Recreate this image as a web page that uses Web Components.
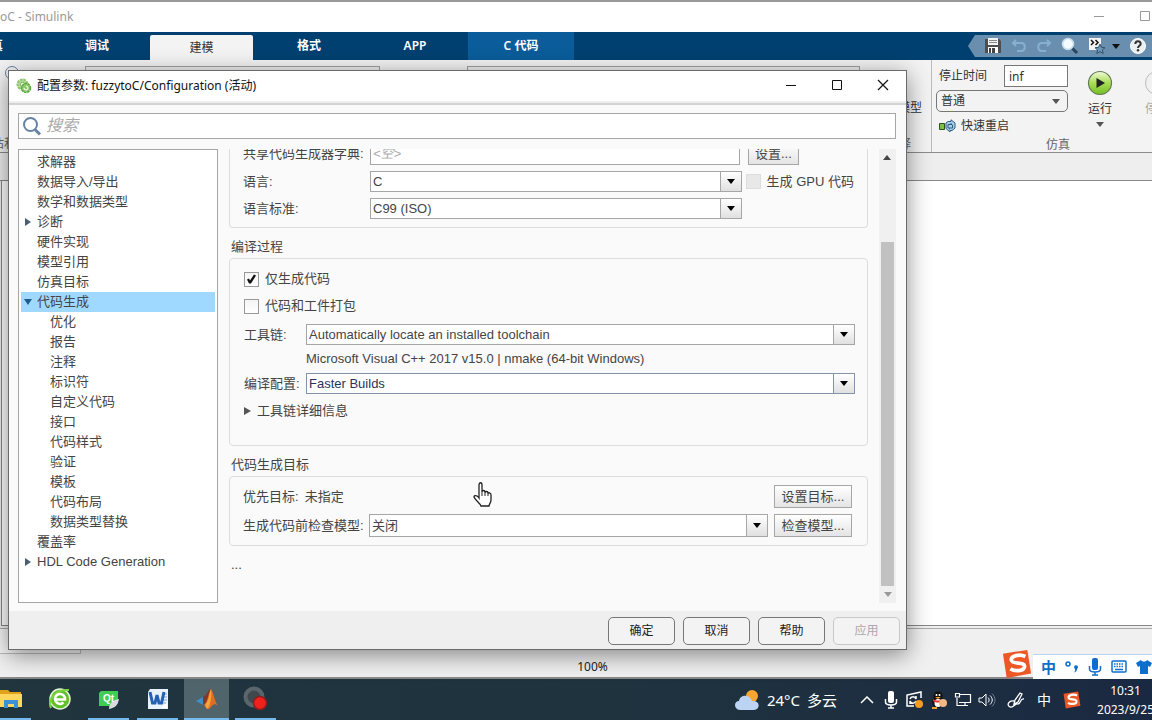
<!DOCTYPE html>
<html lang="zh-CN">
<head>
<meta charset="utf-8">
<meta name="viewport" content="width=device-width, initial-scale=1">
<title>Simulink</title>
<style>
  :root {
    --ui-font: "Noto Sans", "Noto Sans CJK SC", sans-serif;
    --form-font: "Liberation Sans", "Noto Sans CJK SC", sans-serif;
    --text: #444;
    --line: #a6a6a6;
    --navy: #004070;
  }

  body {
    margin: 0;
    height: 100vh;
    overflow: hidden;
    font: 12px/16px var(--ui-font);
    color: #333;
  }
</style>
</head>
<body>
<desktop-shell></desktop-shell>

<script>
const ICONS = {
  gear: `<svg width="16" height="16" viewBox="0 0 16 16"><circle cx="6.500" cy="6.500" r="5" fill="#b9dc9d" stroke="#8cc46e" stroke-width="2" stroke-dasharray="2.600 .8"/><circle cx="6.500" cy="6.500" r="2.200" fill="#fff" stroke="#6fae4c"/><circle cx="10" cy="10" r="4.500" fill="#8fcb6c" stroke="#5aa63f" stroke-width="1.500" stroke-dasharray="2.400 .8"/><path d="M8 10a2 2 0 1 0 2-2" fill="none" stroke="#fff"/></svg>`,
  search: `<svg width="20" height="20" viewBox="0 0 20 20" fill="none" stroke="#6683a3"><circle cx="8.500" cy="8.500" r="6.500" stroke-width="2"/><path d="M13 13.500l5 5" stroke-width="3"/></svg>`,
  minimize: `<svg width="12" height="12" viewBox="0 0 12 12"><path d="M1 6.500h10" stroke="currentColor"/></svg>`,
  maximize: `<svg width="12" height="12" viewBox="0 0 12 12"><path d="M1.500 1.500h9v9h-9z" fill="none" stroke="currentColor"/></svg>`,
  close: `<svg width="12" height="12" viewBox="0 0 12 12"><path d="M1 1l10 10M11 1L1 11" stroke="currentColor" stroke-width="1.200"/></svg>`,
  save: `<svg width="18" height="18" viewBox="0 0 18 18"><path d="M1 2h14l2 2v12H1z" fill="#4e4e50"/><path d="M4 1h10v7H4z" fill="#f3f3f3"/><path d="M5 3.500h8M5 5.500h8" stroke="#888"/><path d="M4 10h10v6H4z" fill="#fff"/><path d="M5 11h2v5H5zM8 11h3v5H8z" fill="#444"/></svg>`,
  undo: `<svg width="16" height="14" viewBox="0 0 16 14" fill="none" stroke="#86b0d2" stroke-width="2"><path d="M5 1L2 4l3 3M2 4h8c5 0 5 8 0 8H6"/></svg>`,
  redo: `<svg width="16" height="14" viewBox="0 0 16 14" fill="none" stroke="#86b0d2" stroke-width="2"><path d="M11 1l3 3-3 3M14 4H6c-5 0-5 8 0 8h4"/></svg>`,
  lens: `<svg width="18" height="18" viewBox="0 0 18 18"><path d="M10 10l6 6" stroke="#29445c" stroke-width="3"/><circle cx="7" cy="7" r="5.500" fill="#f3fbff" stroke="#c8dbe8" stroke-width="1.500"/></svg>`,
  favorite: `<svg width="18" height="18" viewBox="0 0 18 18"><path d="M1 1h12v12H1z" fill="#f4f4f4"/><path d="M3 3l2.500 2.500L3 8M7.500 3L10 5.500 7.500 8" fill="none" stroke="#111" stroke-width="1.500"/><path d="M12 7l1.500 3.300 3.500.4-2.600 2.300.8 3.500-3.200-1.800L8.800 16.500l.8-3.500L7 10.700l3.500-.4z" fill="#6e93b3" stroke="#33536f"/></svg>`,
  help: `<svg width="18" height="18" viewBox="0 0 18 18"><circle cx="9" cy="9" r="7.500" fill="#e9eff3" stroke="#fff"/><path d="M6.300 7c0-3.600 5.400-3.600 5.400-.3C11.700 8.800 9 8.700 9 11" fill="none" stroke="#333" stroke-width="2"/><circle cx="9" cy="13.200" r="1.200" fill="#333"/></svg>`,
  caret: `<svg width="8" height="5" viewBox="0 0 8 5"><path d="M0 0h8L4 5z" fill="currentColor"/></svg>`,
  restart: `<svg width="17" height="14" viewBox="0 0 17 14"><path d="M.5 4.500h5v6h-5z" fill="#7cc142" stroke="#2c4f20"/><path d="M9 2.500h3V.8L16 4v5l-3 2.500h-2V13l-4-3.500V4z" fill="#a8d0ea" stroke="#2d5f83"/><path d="M9 9V5.500h4L11.500 4M13.500 6v3H9.500l1.500 1.300" fill="none" stroke="#2d5f83"/></svg>`,
  run: `<svg width="26" height="26" viewBox="0 0 26 26"><defs><linearGradient id="g" x2="0" y2="1"><stop stop-color="#f1fbd9"/><stop offset=".5" stop-color="#a7dd55"/><stop offset="1" stop-color="#74bd24"/></linearGradient></defs><circle cx="13" cy="13" r="11.500" fill="url(#g)" stroke="#667a55" stroke-width="1.200"/><path d="M9.500 8v10l8.500-5z" fill="#222"/></svg>`,
  stop: `<svg width="26" height="26" viewBox="0 0 26 26"><circle cx="13" cy="13" r="11.500" fill="#f1f1f1" stroke="#bbb"/><path d="M9 9h8v8H9z" fill="#ccc"/></svg>`,
  explorer: `<svg width="24" height="22" viewBox="0 0 24 22"><path d="M1 2h8l2 2h11v15H1z" fill="#e0a21b"/><path d="M1 6h22v13H1z" fill="#ffd75e"/><path d="M5 12h14v8h-4v-4H9v4H5z" fill="#3d91d9"/></svg>`,
  browser: `<svg width="24" height="24" viewBox="0 0 24 24"><circle cx="12" cy="12" r="10" fill="#62bf2c" stroke="#e4f5d8" stroke-width="1.500"/><path d="M3 21C-1 12 8 2 21 3" fill="none" stroke="#7dd441" stroke-width="2"/><path d="M7 12.500h10a5 5 0 1 0-1.500 3" fill="none" stroke="#fff" stroke-width="2.500"/></svg>`,
  word: `<svg width="24" height="24" viewBox="0 0 24 24"><path d="M4 2h18v20H2V5z" fill="#e9f1fb"/><path d="M16 7h5M16 10h5M16 13h5M16 16h4" stroke="#7ba5d8"/><path d="M4 5l2.500 11h2.500l2-8 2 8h2.500L18 5" fill="none" stroke="#2460b4" stroke-width="3"/><path d="M15 21l6-5v5z" fill="#fff"/></svg>`,
  matlab: `<svg width="24" height="24" viewBox="0 0 24 24"><path d="M1 14l7-4 4 3-4 5z" fill="#3f8fc6"/><path d="M8 10c4-1 5-8 8-8l-4 14-4 2z" fill="#85362b"/><path d="M16 2c2 2 4 13 7 17-3-3-5-2-7 1-2 3-3 2-4 2l-3-4c4-3 4-12 7-16z" fill="#df6d22"/><path d="M16 2c1 4 0 12-2 18l-2 2-2-4c4-4 4-11 6-16z" fill="#f4a43a"/></svg>`,
  recorder: `<svg width="26" height="26" viewBox="0 0 26 26"><circle cx="11" cy="11" r="8.500" fill="#3e484e" stroke="#5b666c" stroke-width="4"/><circle cx="17" cy="17" r="6.500" fill="#f0201a" stroke="#8b1e20" stroke-width="1.500"/></svg>`,
  weather: `<svg width="26" height="22" viewBox="0 0 26 22"><circle cx="18" cy="7" r="6" fill="#f6a531"/><path d="M6 21C-1 20 0 12 5 12c1-7 11-7 13 0 8-1 9 8 2 9z" fill="#bcd3f4"/></svg>`,
  chevron: `<svg width="14" height="8" viewBox="0 0 14 8"><path d="M1 7l6-6 6 6" fill="none" stroke="#fff" stroke-width="1.500"/></svg>`,
  mic: `<svg width="14" height="18" viewBox="0 0 14 18"><rect x="4" width="6" height="12" rx="2" fill="currentColor"/><path d="M1.500 8v3c0 4 11 4 11 0V8M7 14v3M4 17h6" fill="none" stroke="currentColor" stroke-width="1.500"/></svg>`,
  sync: `<svg width="20" height="18" viewBox="0 0 20 18" fill="none" stroke="#fff" stroke-width="1.500"><path d="M9 15H2V4l14-3v6M5 8c1-3 5-3 6 0V5M11 10c-1 3-5 3-6 0v3"/><circle cx="14" cy="13" r="4" fill="#f49b20" stroke="none"/></svg>`,
  penguin: `<svg width="18" height="18" viewBox="0 0 18 18"><ellipse cx="8" cy="11" rx="6" ry="6" fill="#151515"/><circle cx="8" cy="5" r="4.500" fill="#111"/><ellipse cx="8" cy="12" rx="3.500" ry="4" fill="#fff"/><path d="M3 8c3 2 7 2 10 0v2c-3 2-7 2-10 0z" fill="#e8342a"/><circle cx="6.500" cy="4" r="1" fill="#fff"/><circle cx="9.500" cy="4" r="1" fill="#fff"/><path d="M5 6h6l-3 2z" fill="#f2a128"/><path d="M2 16h5v2H2z" fill="#f2a128"/><circle cx="13" cy="12" r="4" fill="#f3b785"/></svg>`,
  network: `<svg width="18" height="16" viewBox="0 0 18 16" fill="none" stroke="#fff" stroke-width="1.200"><path d="M5 2.500h11.500v8H5M3 6v7.500h11M11 10.500v3M1.500 1.500h4V5h-4z"/></svg>`,
  volume: `<svg width="18" height="16" viewBox="0 0 18 16" fill="none" stroke="#fff"><path d="M1 6h3l4-4v12l-4-4H1z"/><path d="M10 5.500c1.500 1.500 1.500 3.500 0 5M12 3.500c3 3 3 6 0 9"/><path d="M14 1.500c4 4 4 9 0 13" stroke="#6d7c8b"/></svg>`,
  pen: `<svg width="18" height="18" viewBox="0 0 18 18" fill="none" stroke="#fff" stroke-width="1.300"><path d="M7 13l1-4 5-7 2 1-4 8zM7 10c-5-1-8 4-4 6 4 1 5-4 8-3 3 0 2-6 6-5"/></svg>`,
  sogou: `<svg width="100%" height="100%" viewBox="0 0 32 32"><path d="M1 5l26-4 4 25-26 5z" fill="#eb5725"/><path d="M25 8C19 5 9 7 10 12c1 5 15 1 14 7-1 5-11 5-15 2" fill="none" stroke="#fff" stroke-width="4"/></svg>`,
  punct: `<svg width="14" height="12" viewBox="0 0 14 12"><circle cx="3" cy="3" r="2" fill="none" stroke="currentColor" stroke-width="1.500"/><path d="M9 6a2 2 0 1 1 3 2c0 2-1 3-3 3.500 1-1 1.500-2 1-3z" fill="currentColor"/></svg>`,
  keyboard: `<svg width="16" height="14" viewBox="0 0 16 14"><rect x="1" y="1" width="14" height="11" rx="1" fill="none" stroke="currentColor" stroke-width="1.500"/><path d="M3 4h10M3 6.500h10" stroke="currentColor" stroke-width="1.500" stroke-dasharray="1.500 1"/><path d="M4 9.500h8" stroke="currentColor" stroke-width="1.500"/></svg>`,
  shirt: `<svg width="16" height="16" viewBox="0 0 16 16"><path d="M5 1c1 2 5 2 6 0l5 3-2 4-2-1v8H4V7L2 8 0 4z" fill="currentColor"/></svg>`,
  qt: `<svg width="22" height="22" viewBox="0 0 22 22"><path d="M3 3h17v12l-3 3H1V5z" fill="#41cd52"/><path d="M11 21c0-5 3-9 10-10-1 6-4 9-10 10z" fill="#d9dcdd"/></svg>`,
  hand: `<svg width="20" height="26" viewBox="0 0 20 26"><path d="M6 16V3c0-3 3-3 3 0v7c0-2 3-2 3 0v1c0-2 3-2 3 0v1c0-2 3-1.500 3 1v5c0 3-2 4-2 6H8c-1-3-6-6-7-9 0-2 3-2 5 1z" fill="#fff" stroke="#222" stroke-width="1.300"/><path d="M9 10v4M12 11v3M15 12v2" stroke="#222"/></svg>`,
};

class AppIcon extends HTMLElement {
  constructor() {
    super();
    this.attachShadow({ mode: "open" });
  }

  connectedCallback() {
    this.shadowRoot.innerHTML = `
      <style>
        :host { display: inline-flex; align-items: center; justify-content: center; flex: none; }
        svg { display: block; }
      </style>
      ${ICONS[this.getAttribute("name")] || ""}
    `;
  }
}

class WindowTitle extends HTMLElement {
  constructor() {
    super();
    this.attachShadow({ mode: "open" });
    this.shadowRoot.innerHTML = `
      <style>
        :host { display: flex; align-items: center; background: #fff; flex: none; }
        .caption { flex: 1; display: flex; align-items: center; gap: 5px; white-space: nowrap; }
        button {
          width: 46px;
          height: 28px;
          border: 0;
          padding: 0;
          background: none;
          color: inherit;
        }
      </style>
      <div class="caption"><slot></slot></div>
      <button aria-label="最小化"><app-icon name="minimize"></app-icon></button>
      <button aria-label="最大化"><app-icon name="maximize"></app-icon></button>
      <button aria-label="关闭"><app-icon name="close"></app-icon></button>
    `;
  }
}

class TabStrip extends HTMLElement {
  constructor() {
    super();
    this.attachShadow({ mode: "open" });
    this.shadowRoot.innerHTML = `
      <style>
        :host {
          display: flex;
          justify-content: space-between;
          height: 28px;
          background: var(--navy);
        }
        nav { display: flex; margin-left: -62px; }
        nav button {
          width: 106px;
          border: 0;
          padding: 0;
          background: none;
          color: #fff;
          font: 600 12px/16px var(--ui-font);
        }
        nav button.active {
          margin: 3px 3px 0 0;
          width: 103px;
          background: #f3f3f3;
          color: #333;
          font-weight: 400;
          border-radius: 2px 2px 0 0;
        }
        nav button.context { background: #0a5c9a; }
        .quick {
          display: flex;
          align-items: center;
          gap: 9px;
          margin: 3px 0;
          padding: 0 5px 0 16px;
          background: #6a8fae;
          clip-path: polygon(7px 0, 100% 0, 100% 100%, 7px 100%, 0 50%);
        }
        .quick button { display: flex; border: 0; padding: 0; background: none; color: #111; }
        .quick .more { margin-left: -3px; }
      </style>
      <nav>
        <button>仿真</button>
        <button>调试</button>
        <button class="active">建模</button>
        <button>格式</button>
        <button>APP</button>
        <button class="context">C 代码</button>
      </nav>
      <div class="quick">
        <button aria-label="保存"><app-icon name="save"></app-icon></button>
        <button aria-label="撤销"><app-icon name="undo"></app-icon></button>
        <button aria-label="重做"><app-icon name="redo"></app-icon></button>
        <button aria-label="查找"><app-icon name="lens"></app-icon></button>
        <button aria-label="收藏"><app-icon name="favorite"></app-icon></button>
        <button class="more" aria-label="更多"><app-icon name="caret"></app-icon></button>
        <button aria-label="帮助"><app-icon name="help"></app-icon></button>
      </div>
    `;
  }
}

class ToolStrip extends HTMLElement {
  constructor() {
    super();
    this.attachShadow({ mode: "open" });
    this.shadowRoot.innerHTML = `
      <style>
        :host {
          display: flex;
          height: 92px;
          background: #f3f3f3;
          border-bottom: 1px solid #8c8c8c;
          overflow: hidden;
        }
        .tools { flex: 1; display: flex; justify-content: space-between; gap: 18px; padding: 6px 9px 0 5px; }
        .first { width: 62px; display: flex; flex-direction: column; justify-content: space-between; white-space: nowrap; color: #666; }
        .first span { margin-left: -25px; }
        .ring { width: 12px; height: 12px; border: 1px solid #6683a3; border-radius: 50%; }
        .gallery { flex: 3; height: 60px; border: 1px solid #a0a0a0; background: #eee; }
        .gallery.wide { flex: 4; margin-left: 69px; }
        .select-model {
          width: 44px;
          display: flex;
          flex-direction: column;
          align-items: flex-end;
          justify-content: flex-end;
        }
        .select-model span { height: 36px; white-space: nowrap; }
        .select-model small { font-size: 12px; height: 16px; padding-right: 11px; white-space: nowrap; color: #666; }
        .simulate {
          display: grid;
          grid-template-columns: 132px 44px 20px;
          grid-template-rows: 78px 14px;
          column-gap: 10px;
          padding-left: 4px;
          border-left: 1px solid #bbb;
        }
        .controls { display: grid; gap: 3px; align-content: start; padding-top: 5px; }
        .stop { display: flex; align-items: center; justify-content: space-between; padding-left: 3px; }
        input, select {
          box-sizing: border-box;
          height: 22px;
          margin: 0;
          background: #fff;
          color: #333;
          border: 1px solid #777;
          font: 12px/16px var(--ui-font);
        }
        input { width: 64px; padding: 0 4px; }
        .pick { display: grid; align-items: center; }
        .pick > * { grid-area: 1 / 1; }
        .pick app-icon { justify-self: end; margin-right: 8px; color: #555; pointer-events: none; }
        select { appearance: none; width: 100%; border-radius: 5px; padding: 0 4px; background: #f3f3f3; }
        button { border: 0; padding: 0; background: none; color: #333; font: 12px/16px var(--ui-font); }
        .fast { display: flex; align-items: center; gap: 5px; padding-left: 3px; height: 22px; }
        .big { display: flex; flex-direction: column; align-items: center; gap: 5px; padding-top: 10px; color: #333; }
        .big app-icon[name="caret"] { color: #555; }
        .big:disabled { width: 50px; color: #aaa; }
        .title { grid-column: 1 / 3; padding-left: 110px; line-height: 14px; color: #666; white-space: nowrap; }
      </style>
      <div class="tools">
        <div class="first"><div class="ring"></div><span>评估和管理</span></div>
        <div class="gallery"></div>
        <div class="gallery wide"></div>
        <div class="select-model"><span>选择模型</span><small>选择</small></div>
      </div>
      <div class="simulate">
        <div class="controls">
          <div class="stop"><label for="stop-time">停止时间</label><input id="stop-time" value="inf"></div>
          <div class="pick">
            <select aria-label="仿真模式"><option>普通</option></select>
            <app-icon name="caret"></app-icon>
          </div>
          <button class="fast"><app-icon name="restart"></app-icon>快速重启</button>
        </div>
        <button class="big"><app-icon name="run"></app-icon>运行<app-icon name="caret"></app-icon></button>
        <button class="big" disabled><app-icon name="stop"></app-icon>停止</button>
        <div class="title">仿真</div>
      </div>
    `;
  }
}

class NavTree extends HTMLElement {
  constructor() {
    super();
    this.attachShadow({ mode: "open" });
    this.shadowRoot.innerHTML = `
      <style>
        :host { display: block; background: #fff; border: 1px solid var(--line); padding: 2px; box-sizing: border-box; overflow: hidden; }
        ul { list-style: none; margin: 0; padding: 0; }
        li {
          display: flex;
          align-items: center;
          height: 20px;
          line-height: 18px;
          white-space: nowrap;
        }
        li::before { content: ""; width: 16px; flex: none; }
        li.child::before { width: 29px; }
        li.closed::before, li.open::before { width: 8px; height: 8px; margin: 0 5px 0 3px; background: #4b5d70; }
        li.closed::before { clip-path: polygon(1px 0, 7px 50%, 1px 100%); }
        li.open::before { background: #1d5c93; clip-path: polygon(0 1px, 100% 1px, 50% 7px); }
        li.selected { background: #a0d9ff; }
      </style>
      <ul role="tree" aria-label="配置类别"></ul>
    `;
  }

  connectedCallback() {
    const items = [
      ["求解器"], ["数据导入/导出"], ["数学和数据类型"], ["诊断", "closed"],
      ["硬件实现"], ["模型引用"], ["仿真目标"], ["代码生成", "open selected"],
      ["优化", "child"], ["报告", "child"], ["注释", "child"], ["标识符", "child"],
      ["自定义代码", "child"], ["接口", "child"], ["代码样式", "child"],
      ["验证", "child"], ["模板", "child"], ["代码布局", "child"],
      ["数据类型替换", "child"], ["覆盖率"], ["HDL Code Generation", "closed"],
    ];
    this.shadowRoot.querySelector("ul").innerHTML = items
      .map(([text, state = ""]) => `<li role="treeitem" class="${state}">${text}</li>`)
      .join("");
  }
}

class ComboField extends HTMLElement {
  constructor() {
    super();
    this.attachShadow({ mode: "open" });
  }

  connectedCallback() {
    this.shadowRoot.innerHTML = `
      <style>
        :host { display: flex; align-items: center; }
        label { width: var(--label-width); flex: none; white-space: nowrap; }
        .box { flex: 1; display: grid; height: var(--box-height, 21px); }
        select, .arrow { grid-area: 1 / 1; box-sizing: border-box; }
        select {
          appearance: none;
          width: 100%;
          margin: 0;
          padding: 0 24px 0 2px;
          border: 1px solid var(--line);
          border-radius: 0;
          background: #fff;
          color: var(--text);
          font: 13px/18px var(--form-font);
        }
        .arrow {
          justify-self: end;
          width: 22px;
          display: grid;
          place-items: center;
          border: 1px solid var(--line);
          background: linear-gradient(#fff, #e0e0e0);
          color: #000;
          pointer-events: none;
        }
        :host([focused]) select, :host([focused]) .arrow { border-color: #8494a8; }
        :host([focused]) select { color: #26345c; }
      </style>
      <label for="field">${this.getAttribute("label")}</label>
      <div class="box">
        <select id="field"><option>${this.getAttribute("value")}</option></select>
        <span class="arrow"><app-icon name="caret"></app-icon></span>
      </div>
      <slot></slot>
    `;
  }
}

class CheckField extends HTMLElement {
  constructor() {
    super();
    this.attachShadow({ mode: "open" });
  }

  connectedCallback() {
    this.shadowRoot.innerHTML = `
      <style>
        :host { display: block; white-space: nowrap; }
        label { display: flex; align-items: center; gap: 6px; line-height: 18px; }
        input {
          appearance: none;
          box-sizing: border-box;
          width: 15px;
          height: 15px;
          margin: 0;
          border: 1px solid #999;
          background: linear-gradient(#f4f4f4, #fff);
        }
        input:checked::before {
          content: "";
          display: block;
          width: 13px;
          height: 13px;
          background: #111;
          clip-path: polygon(2px 7px, 4px 6px, 5px 8px, 9px 2px, 11px 3px, 6px 11px, 4px 11px);
        }
        input:disabled { border-color: #ddd; background: #e8e8e8; }
      </style>
      <label>
        <input type="checkbox" ${this.hasAttribute("checked") ? "checked" : ""} ${this.hasAttribute("disabled") ? "disabled" : ""}>
        <slot></slot>
      </label>
    `;
  }
}

class PushButton extends HTMLElement {
  constructor() {
    super();
    this.attachShadow({ mode: "open" });
  }

  connectedCallback() {
    this.shadowRoot.innerHTML = `
      <style>
        :host { display: inline-flex; flex: none; }
        button {
          box-sizing: border-box;
          height: 23px;
          width: 100%;
          padding: 0 6px;
          border: 1px solid var(--line);
          background: linear-gradient(#fff, #e4e4e4);
          color: var(--text);
          font: 13px/18px var(--form-font);
          white-space: nowrap;
        }
        :host([round]) { width: 67px; }
        :host([round]) button {
          height: 28px;
          border: 1px solid #777;
          border-radius: 5px;
          background: #f3f3f3;
          color: #222;
          font: 12px/16px var(--ui-font);
        }
        :host([round][disabled]) button { border-color: #c8c8c8; color: #aaa; }
      </style>
      <button ${this.hasAttribute("disabled") ? "disabled" : ""}><slot></slot></button>
    `;
  }
}

class SettingGroup extends HTMLElement {
  constructor() {
    super();
    this.attachShadow({ mode: "open" });
  }

  connectedCallback() {
    const heading = this.getAttribute("heading");
    this.shadowRoot.innerHTML = `
      <style>
        :host { display: block; flex: none; }
        h3 { margin: 0; padding: 10px 2px 2px; font: 13px/18px var(--form-font); }
        .content { border: 1px solid #ddd; border-radius: 4px; padding: 8px 13px; }
        :host([cut]) .content { border-top: 0; border-radius: 0 0 4px 4px; padding-top: 0; }
      </style>
      ${heading ? `<h3>${heading}</h3>` : ""}
      <div class="content"><slot></slot></div>
    `;
  }
}

class ScrollRail extends HTMLElement {
  constructor() {
    super();
    this.attachShadow({ mode: "open" });
    this.shadowRoot.innerHTML = `
      <style>
        :host { display: flex; flex-direction: column; width: 17px; background: #f0f0f0; }
        button { height: 17px; border: 0; padding: 0; background: none; color: #999; display: grid; place-items: center; }
        .up { color: #444; transform: rotate(180deg); }
        .track { flex: 1; display: flex; flex-direction: column; justify-content: flex-end; padding: 0 2px; }
        .thumb { height: 82%; background: #c1c1c1; }
      </style>
      <button class="up" aria-label="向上滚动"><app-icon name="caret"></app-icon></button>
      <div class="track"><div class="thumb"></div></div>
      <button aria-label="向下滚动"><app-icon name="caret"></app-icon></button>
    `;
  }
}

class CodeGenPane extends HTMLElement {
  constructor() {
    super();
    this.attachShadow({ mode: "open" });
    this.shadowRoot.innerHTML = `
      <style>
        :host {
          display: flex;
          flex-direction: column;
          justify-content: flex-end;
          overflow: hidden;
          box-sizing: border-box;
          padding: 0 11px 29px;
          line-height: 18px;
        }
        .rows { display: grid; gap: 6px; }
        .language { --label-width: 127px; }
        .row { display: flex; align-items: center; }
        .side { width: 108px; margin-left: 4px; }
        .row label { width: var(--label-width); white-space: nowrap; }
        .row input {
          flex: 1;
          min-width: 0;
          box-sizing: border-box;
          height: 22px;
          margin: 0;
          padding: 0 2px;
          border: 1px solid var(--line);
          background: #fff;
          font: italic 13px/18px var(--form-font);
        }
        input::placeholder { color: #aaa; opacity: 1; }
        .row .side { width: 106px; margin-left: 8px; }
        .build { --label-width: 62px; display: grid; padding: 3px 0 17px 1px; }
        .build check-field { height: 27px; }
        .note { padding: 5px 0 5px 62px; white-space: nowrap; }
        .build combo-field { margin-right: -1px; }
        .details {
          display: flex;
          align-items: center;
          gap: 6px;
          margin-top: 8px;
          padding: 0;
          border: 0;
          background: none;
          color: var(--text);
          font: 13px/18px var(--form-font);
        }
        .details::before { content: ""; width: 7px; height: 8px; background: #555; clip-path: polygon(0 0, 100% 50%, 0 100%); }
        .target { --label-width: 126px; --box-height: 23px; padding-right: 2px; }
        .target .row { gap: 6px; }
        .target .row span:last-of-type { flex: 1; }
        .target push-button, .target .check { width: 78px; }
        .target .check { margin-left: 6px; }
        .more { padding: 10px 2px 0; }
      </style>
      <setting-group cut>
        <div class="rows language">
          <div class="row">
            <label for="dictionary">共享代码生成器字典:</label>
            <input id="dictionary" placeholder="&lt;空&gt;">
            <div class="side"><push-button>设置...</push-button></div>
          </div>
          <combo-field label="语言:" value="C"><check-field class="side" disabled>生成 GPU 代码</check-field></combo-field>
          <combo-field label="语言标准:" value="C99 (ISO)"><div class="side"></div></combo-field>
        </div>
      </setting-group>
      <setting-group heading="编译过程">
        <div class="build">
          <check-field checked>仅生成代码</check-field>
          <check-field>代码和工件打包</check-field>
          <combo-field label="工具链:" value="Automatically locate an installed toolchain"></combo-field>
          <div class="note">Microsoft Visual C++ 2017 v15.0 | nmake (64-bit Windows)</div>
          <combo-field label="编译配置:" value="Faster Builds" focused></combo-field>
          <button class="details" aria-expanded="false">工具链详细信息</button>
        </div>
      </setting-group>
      <setting-group heading="代码生成目标">
        <div class="rows target">
          <div class="row"><span>优先目标:</span><span>未指定</span><push-button>设置目标...</push-button></div>
          <combo-field label="生成代码前检查模型:" value="关闭"><push-button class="check">检查模型...</push-button></combo-field>
        </div>
      </setting-group>
      <div class="more">...</div>
    `;
  }
}

class ConfigDialog extends HTMLElement {
  constructor() {
    super();
    this.attachShadow({ mode: "open" });
    this.shadowRoot.innerHTML = `
      <style>
        :host {
          display: flex;
          flex-direction: column;
          border: 1px solid #6b6b6b;
          background: #fafafa;
          box-shadow: 0 5px 22px rgba(0, 0, 0, .45);
          color: var(--text);
          font: 13px/18px var(--form-font);
        }
        window-title {
          height: 30px;
          padding-left: 7px;
          color: #111;
          font: 12px/16px var(--ui-font);
        }
        .rule { flex: none; height: 2px; background: #efefef; border-bottom: 2px solid #d3d3d3; }
        .search {
          display: flex;
          align-items: center;
          gap: 2px;
          box-sizing: border-box;
          height: 26px;
          margin: 8px 10px 10px 9px;
          padding: 0 3px;
          border: 1px solid var(--line);
          background: #fff;
        }
        .search input { flex: 1; border: 0; padding: 0 2px; outline: 0; font: italic 16px/20px var(--form-font); }
        .search input::placeholder { color: #aaa; }
        .main { flex: 1; min-height: 0; display: flex; margin: 0 10px 8px 9px; }
        nav-tree { width: 200px; flex: none; }
        code-gen-pane { flex: 1; min-width: 0; }
        footer { display: flex; justify-content: flex-end; gap: 8px; padding: 6px 6px 4px; background: #efefef; }
      </style>
      <window-title><app-icon name="gear"></app-icon>配置参数: fuzzytoC/Configuration (活动)</window-title>
      <div class="rule"></div>
      <div class="search">
        <app-icon name="search"></app-icon>
        <input type="search" placeholder="搜索" aria-label="搜索">
      </div>
      <div class="main">
        <nav-tree></nav-tree>
        <code-gen-pane></code-gen-pane>
        <scroll-rail></scroll-rail>
      </div>
      <footer>
        <push-button round>确定</push-button>
        <push-button round>取消</push-button>
        <push-button round>帮助</push-button>
        <push-button round disabled>应用</push-button>
      </footer>
    `;
  }
}

class ImeBar extends HTMLElement {
  constructor() {
    super();
    this.attachShadow({ mode: "open" });
    this.shadowRoot.innerHTML = `
      <style>
        :host { display: flex; align-items: flex-end; color: #0d6fcb; }
        .logo { width: 32px; height: 30px; }
        .logo app-icon { width: 32px; height: 30px; }
        .keys {
          display: flex;
          align-items: center;
          gap: 9px;
          height: 24px;
          padding: 0 0 0 8px;
          border-top: 1px solid #b9d4ee;
          background: #fff;
        }
        b { font-size: 15px; line-height: 20px; }
      </style>
      <div class="logo"><app-icon name="sogou"></app-icon></div>
      <div class="keys">
        <b>中</b>
        <app-icon name="punct"></app-icon>
        <app-icon name="mic"></app-icon>
        <app-icon name="keyboard"></app-icon>
        <app-icon name="shirt"></app-icon>
      </div>
    `;
  }
}

class TaskBar extends HTMLElement {
  constructor() {
    super();
    this.attachShadow({ mode: "open" });
    this.shadowRoot.innerHTML = `
      <style>
        :host {
          display: flex;
          justify-content: space-between;
          height: 41px;
          background: linear-gradient(90deg, #20353e, #1f323f 60%, #1a2942);
          color: #fff;
        }
        .apps { display: flex; margin-left: -14px; }
        .apps button {
          display: grid;
          place-items: center;
          width: 41px;
          margin: 0 4px;
          padding: 0;
          border: 0;
          border-bottom: 2px solid transparent;
          background: none;
          color: #fff;
        }
        .apps .running { border-color: #76b9ed; }
        .apps .active { width: 45px; margin: 0 2px; background: #50646c; }
        .qt > * { grid-area: 1 / 1; }
        .qt span { font: bold 10px/12px var(--form-font); }
        .tray { display: flex; align-items: center; margin-right: -2px; }
        .weather { display: flex; align-items: center; gap: 7px; margin-right: 18px; font-size: 15px; line-height: 20px; white-space: nowrap; }
        .system, .input { display: flex; align-items: center; }
        .system app-icon { width: 24px; }
        .input { margin-left: 3px; }
        .input > * { width: 28px; text-align: center; }
        .input app-icon[name="sogou"] { box-sizing: border-box; height: 18px; padding: 0 5px; }
        .ime { font-size: 14px; }
        .clock { margin-left: 11px; text-align: center; line-height: 19px; white-space: nowrap; }
      </style>
      <div class="apps">
        <button class="running" aria-label="文件资源管理器"><app-icon name="explorer"></app-icon></button>
        <button aria-label="浏览器"><app-icon name="browser"></app-icon></button>
        <button class="running qt"><app-icon name="qt"></app-icon><span>Qt</span></button>
        <button class="running" aria-label="Word"><app-icon name="word"></app-icon></button>
        <button class="running active" aria-label="MATLAB"><app-icon name="matlab"></app-icon></button>
        <button class="running" aria-label="录屏"><app-icon name="recorder"></app-icon></button>
      </div>
      <div class="tray">
        <div class="weather"><app-icon name="weather"></app-icon><span>24°C</span><span>多云</span></div>
        <div class="system">
          <app-icon name="chevron"></app-icon>
          <app-icon name="mic"></app-icon>
          <app-icon name="sync"></app-icon>
          <app-icon name="penguin"></app-icon>
          <app-icon name="network"></app-icon>
          <app-icon name="volume"></app-icon>
        </div>
        <div class="input">
          <app-icon name="pen"></app-icon>
          <span class="ime">中</span>
          <app-icon name="sogou"></app-icon>
        </div>
        <div class="clock">10:31<br>2023/9/25</div>
      </div>
    `;
  }
}

class DesktopShell extends HTMLElement {
  constructor() {
    super();
    this.attachShadow({ mode: "open" });
    this.shadowRoot.innerHTML = `
      <style>
        :host { display: flex; flex-direction: column; position: relative; height: 100%; overflow: hidden; background: #f0f0f0; }
        .app { height: 30px; border-top: 2px solid #999; color: #999; margin-right: -62px; }
        .path { height: 27px; background: #eee; border-bottom: 1px solid #888; flex: none; }
        .editor { flex: 1; margin-left: 1px; background: #fff; border: 1px solid #888; border-top: 0; border-right: 0; }
        .below { height: 25px; flex: none; border-top: 1px solid #aaa; margin-top: 2px; }
        .tab { width: 80px; height: 24px; border: 1px solid #bbb; border-width: 0 1px 1px 0; background: #f6f6f6; }
        .status { height: 23px; flex: none; padding-left: 33px; border-bottom: 2px solid #888; text-align: center; line-height: 26px; color: #222; }
        /* windows and pointer lying over the desktop */
        config-dialog { position: absolute; inset: 70px 245px 70px 8px; }
        ime-bar { position: absolute; right: 0; bottom: 41px; }
        .pointer { position: absolute; left: 473px; top: 482px; }
      </style>
      <window-title class="app">oC - Simulink</window-title>
      <tab-strip></tab-strip>
      <tool-strip></tool-strip>
      <div class="path"></div>
      <div class="editor"></div>
      <div class="below"><div class="tab"></div></div>
      <div class="status">100%</div>
      <task-bar></task-bar>
      <config-dialog></config-dialog>
      <ime-bar></ime-bar>
      <app-icon class="pointer" name="hand"></app-icon>
    `;
  }
}

customElements.define("app-icon", AppIcon);
customElements.define("window-title", WindowTitle);
customElements.define("tab-strip", TabStrip);
customElements.define("tool-strip", ToolStrip);
customElements.define("nav-tree", NavTree);
customElements.define("combo-field", ComboField);
customElements.define("check-field", CheckField);
customElements.define("push-button", PushButton);
customElements.define("setting-group", SettingGroup);
customElements.define("scroll-rail", ScrollRail);
customElements.define("code-gen-pane", CodeGenPane);
customElements.define("config-dialog", ConfigDialog);
customElements.define("ime-bar", ImeBar);
customElements.define("task-bar", TaskBar);
customElements.define("desktop-shell", DesktopShell);
</script>
</body>
</html>
